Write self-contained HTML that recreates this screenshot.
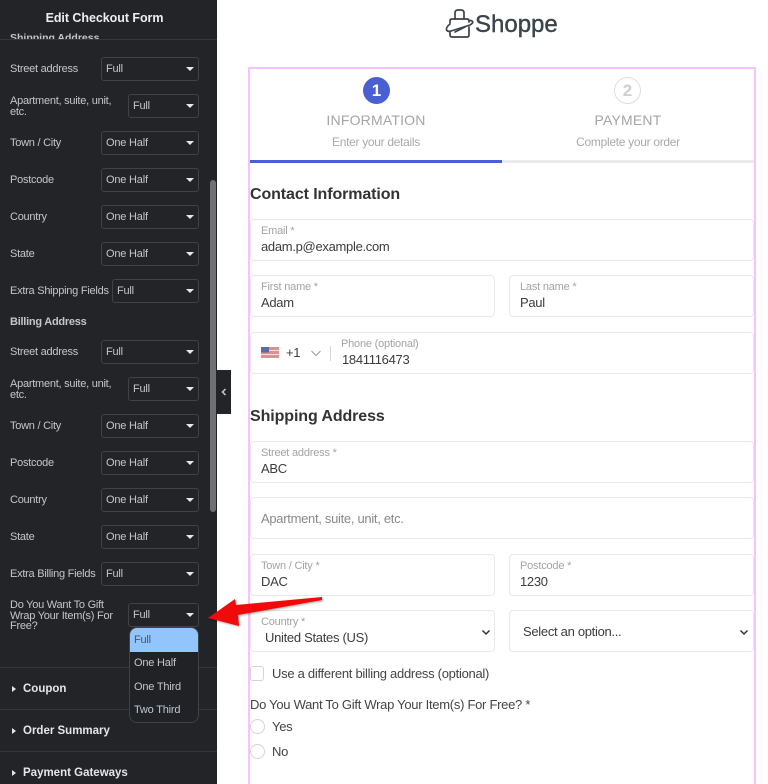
<!DOCTYPE html>
<html><head><meta charset="utf-8"><style>
*{box-sizing:border-box}
html,body{margin:0;padding:0;overflow:hidden;width:768px;height:784px}
body{background:#fff;font-family:"Liberation Sans",sans-serif}
#root{position:relative;width:768px;height:784px;overflow:hidden;background:#fff}
.a{position:absolute;white-space:nowrap}
#side{position:absolute;left:0;top:0;width:217px;height:784px;background:#222427;overflow:hidden}
.l{position:absolute;left:10px;color:#c4c6c9;font-size:11px;letter-spacing:-.25px;line-height:10.5px;white-space:nowrap;margin-top:1px}
.s{position:absolute;height:24px;border:1px solid #3f4246;border-radius:3px;color:#c4c6c9;font-size:11px;letter-spacing:-.2px;line-height:22px;padding-left:4px;right:18px}
.s:after{content:"";position:absolute;right:4px;top:9px;border-top:4px solid #e6e8ea;border-left:4.5px solid transparent;border-right:4.5px solid transparent}
.h{position:absolute;left:23px;color:#e4e6e8;font-size:11.5px;font-weight:bold;line-height:14px;white-space:nowrap;margin-top:1px}
.t{position:absolute;left:12px;border-left:4px solid #e4e6e8;border-top:3px solid transparent;border-bottom:3px solid transparent;margin-top:1px}
.r{position:absolute;left:0;width:217px;height:1px;background:#35383b}
.o{position:absolute;left:4px;font-size:11px;letter-spacing:-.2px;color:#c4c6c9;line-height:12px}
.i{position:absolute;height:42px;border:1px solid #e8e8e8;border-radius:4px;background:#fff}
.c{position:absolute;left:10px;top:5px;font-size:11px;letter-spacing:-.2px;color:#a3a3a3;line-height:12px;white-space:nowrap}
.v{position:absolute;left:10px;top:20px;font-size:13px;letter-spacing:-.3px;color:#3c3c3c;line-height:14px;white-space:nowrap}
.b{position:absolute;left:250px;font-size:16px;letter-spacing:-.1px;font-weight:bold;color:#333;line-height:20px;white-space:nowrap}
.x{position:absolute;font-size:13px;letter-spacing:-.28px;color:#444;line-height:14px;white-space:nowrap}
.q{position:absolute;left:250px;width:15px;height:15px;border:1px solid #d4d4d4;border-radius:50%}
</style></head><body><div id="root">
<div id="side">
<div class="a" style="left:0;width:209px;top:11px;text-align:center;color:#eceef0;font-size:12.5px;letter-spacing:-.05px;font-weight:bold;line-height:14px">Edit Checkout Form</div>
<div class="a" style="left:10px;top:32px;color:#c4c6c9;font-size:10.5px;font-weight:bold;line-height:12px;height:7px;overflow:hidden">Shipping Address</div>
<div class="r" style="top:39px;height:1px;background:#36393c"></div>

<div class="l" style="top:63px">Street address</div><div class="s" style="left:101px;top:57px">Full</div>
<div class="l" style="top:95px">Apartment, suite, unit,<br>etc.</div><div class="s" style="left:128px;top:94px">Full</div>
<div class="l" style="top:137px">Town / City</div><div class="s" style="left:101px;top:131px">One Half</div>
<div class="l" style="top:174px">Postcode</div><div class="s" style="left:101px;top:168px">One Half</div>
<div class="l" style="top:211px">Country</div><div class="s" style="left:101px;top:205px">One Half</div>
<div class="l" style="top:248px">State</div><div class="s" style="left:101px;top:242px">One Half</div>
<div class="l" style="top:285px">Extra Shipping Fields</div><div class="s" style="left:112px;top:279px">Full</div>
<div class="l" style="top:316px;font-weight:bold">Billing Address</div>
<div class="l" style="top:346px">Street address</div><div class="s" style="left:101px;top:340px">Full</div>
<div class="l" style="top:378px">Apartment, suite, unit,<br>etc.</div><div class="s" style="left:128px;top:377px">Full</div>
<div class="l" style="top:420px">Town / City</div><div class="s" style="left:101px;top:414px">One Half</div>
<div class="l" style="top:457px">Postcode</div><div class="s" style="left:101px;top:451px">One Half</div>
<div class="l" style="top:494px">Country</div><div class="s" style="left:101px;top:488px">One Half</div>
<div class="l" style="top:531px">State</div><div class="s" style="left:101px;top:525px">One Half</div>
<div class="l" style="top:568px">Extra Billing Fields</div><div class="s" style="left:101px;top:562px">Full</div>
<div class="l" style="top:599px">Do You Want To Gift<br>Wrap Your Item(s) For<br>Free?</div><div class="s" style="left:128px;top:603px">Full</div>

<div class="r" style="top:667px"></div><div class="r" style="top:709px"></div><div class="r" style="top:751px"></div>
<div class="t" style="top:685px"></div><div class="h" style="top:681px">Coupon</div>
<div class="t" style="top:727px"></div><div class="h" style="top:723px">Order Summary</div>
<div class="t" style="top:769px"></div><div class="h" style="top:765px">Payment Gateways</div>

<div class="a" style="left:129px;top:627px;width:70px;height:96px;background:#212226;border:1px solid #3f4246;border-radius:8px;overflow:hidden">
<div style="position:absolute;left:0;top:0;width:68px;height:24px;background:#93c5fd"></div>
<div class="o" style="top:6px;color:#4a5560">Full</div>
<div class="o" style="top:29px">One Half</div>
<div class="o" style="top:53px">One Third</div>
<div class="o" style="top:76px;color:#b8c8dc">Two Third</div>
</div>
<div class="a" style="left:210px;top:180px;width:6px;height:332px;background:#6e7073;border-radius:3px"></div>
</div>
<div class="a" style="left:217px;top:370px;width:14px;height:44px;background:#222427"></div>
<svg class="a" style="left:217px;top:370px" width="14" height="44"><path d="M8.5 19L5.5 22L8.5 25" fill="none" stroke="#c8cacc" stroke-width="1.5"/></svg>

<svg class="a" style="left:445px;top:8px" width="30" height="32" viewBox="0 0 30 32" fill="none" stroke="#3b444b" stroke-width="1.700" stroke-linecap="round" stroke-linejoin="round"><path d="M10 11V5Q10 2 13 2H16Q19 2 19 5V11"/><path d="M5 15V13Q5 11 7 11H22Q24 11 24 13V14"/><path d="M24 19V27Q24 29 22 29H7Q5 29 5 27V24"/><path d="M5 16Q1 19 1.500 22Q2.500 24 6 23L25 17Q28.500 15 27.500 13.500Q27 12.500 25 12.500"/><path d="M10 24L20 19"/></svg>
<div class="a" style="left:475px;top:9px;font-size:24px;line-height:32px;color:#3b444b;-webkit-text-stroke:.4px #3b444b">Shoppe</div>

<div class="a" style="left:248px;top:67px;width:508px;height:730px;border:2px solid #f7c2fd"></div>
<div class="a" style="left:363px;top:77px;width:27px;height:27px;background:#4a5fd1;border-radius:50%;color:#fff;font-weight:bold;font-size:17px;line-height:27px;text-align:center">1</div>
<div class="a" style="left:614px;top:77px;width:27px;height:27px;border:1px solid #dedede;border-radius:50%;color:#cfcfcf;font-weight:bold;font-size:17px;line-height:25px;text-align:center">2</div>
<div class="a" style="left:250px;width:252px;top:112px;text-align:center;font-size:14px;letter-spacing:.2px;color:#a5a5a5;line-height:16px">INFORMATION</div>
<div class="a" style="left:502px;width:252px;top:112px;text-align:center;font-size:14px;letter-spacing:.2px;color:#a5a5a5;line-height:16px">PAYMENT</div>
<div class="a" style="left:250px;width:252px;top:135px;text-align:center;font-size:12px;letter-spacing:-.3px;color:#aaa;line-height:14px">Enter your details</div>
<div class="a" style="left:502px;width:252px;top:135px;text-align:center;font-size:12px;letter-spacing:-.3px;color:#aaa;line-height:14px">Complete your order</div>
<div class="a" style="left:250px;top:160px;width:252px;height:3px;background:#4a5fd1"></div>
<div class="a" style="left:502px;top:160px;width:252px;height:3px;background:#ebebeb"></div>

<div class="b" style="top:185px">Contact Information</div>
<div class="i" style="left:250px;top:219px;width:504px"><div class="c">Email *</div><div class="v">adam.p@example.com</div></div>
<div class="i" style="left:250px;top:275px;width:245px"><div class="c">First name *</div><div class="v">Adam</div></div>
<div class="i" style="left:509px;top:275px;width:245px"><div class="c">Last name *</div><div class="v">Paul</div></div>
<div class="i" style="left:250px;top:332px;width:504px"><div class="c" style="left:90px">Phone (optional)</div><div class="v" style="left:91px">1841116473</div>
<svg style="position:absolute;left:10px;top:14px" width="18" height="11"><rect width="18" height="11" fill="#e88a90"/><path d="M0 3.500H18M0 7.500H18" stroke="#f3dfe1" stroke-width="1"/><rect width="8" height="5.500" fill="#5b6aa0"/></svg>
<div class="v" style="left:35px;top:13px">+1</div>
<svg style="position:absolute;left:60px;top:17px" width="10" height="7"><path d="M.5 1L5 5.500L9.500 1" fill="none" stroke="#999"/></svg>
<div style="position:absolute;left:79px;top:13px;width:1px;height:15px;background:#d8d8d8"></div></div>

<div class="b" style="top:407px">Shipping Address</div>
<div class="i" style="left:250px;top:441px;width:504px"><div class="c">Street address *</div><div class="v">ABC</div></div>
<div class="i" style="left:250px;top:497px;width:504px"><div class="v" style="top:14px;color:#8a8a8a">Apartment, suite, unit, etc.</div></div>
<div class="i" style="left:250px;top:554px;width:245px"><div class="c">Town / City *</div><div class="v">DAC</div></div>
<div class="i" style="left:509px;top:554px;width:245px"><div class="c">Postcode *</div><div class="v">1230</div></div>
<div class="i" style="left:250px;top:610px;width:245px"><div class="c">Country *</div><div class="v" style="left:14px">United States (US)</div>
<svg style="position:absolute;left:230px;top:18px" width="10" height="7"><path d="M1.500 1.500L5 5L8.500 1.500" fill="none" stroke="#333" stroke-width="1.500"/></svg></div>
<div class="i" style="left:509px;top:610px;width:245px"><div class="v" style="left:13px;top:14px">Select an option...</div>
<svg style="position:absolute;left:229px;top:18px" width="10" height="7"><path d="M1.500 1.500L5 5L8.500 1.500" fill="none" stroke="#333" stroke-width="1.500"/></svg></div>
<div class="a" style="left:250px;top:666px;width:14px;height:15px;border:1px solid #d4d4d4;border-radius:3px"></div>
<div class="x" style="left:272px;top:667px">Use a different billing address (optional)</div>
<div class="x" style="left:250px;top:698px">Do You Want To Gift Wrap Your Item(s) For Free? *</div>
<div class="q" style="top:719px"></div><div class="x" style="left:272px;top:720px">Yes</div>
<div class="q" style="top:744px"></div><div class="x" style="left:272px;top:745px">No</div>

<svg class="a" style="left:200px;top:590px;filter:drop-shadow(1px 1px 1px rgba(0,0,0,.35))" width="130" height="45"><path d="M8 28L35 9L36 15L122 7L122 10L38 25L39 36Z" fill="#f00a0a"/></svg>
</div></body></html>
